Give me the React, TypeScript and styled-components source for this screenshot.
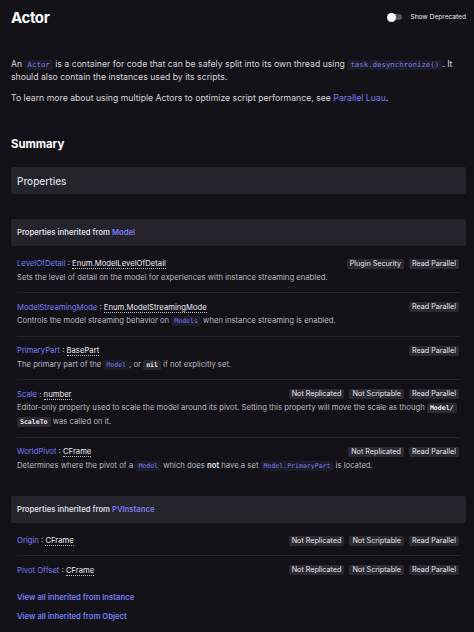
import React from 'react';
import styled, { createGlobalStyle } from 'styled-components';

const GlobalStyle = createGlobalStyle`
  html, body {
    margin: 0;
    padding: 0;
    background: #121118;
  }
  body {
    font-family: Inter, "Noto Sans", "Liberation Sans", sans-serif;
    color: #d9d9de;
  }
`;

const Page = styled.div`
  width: 474px;
  height: 632px;
  overflow: hidden;
  padding: 0 8px 0 11px;
  box-sizing: border-box;
  background: #121118;
`;

const Header = styled.div`
  display: flex;
  align-items: center;
  justify-content: space-between;
  height: 34px;
`;

const Title = styled.h1`
  margin: 0;
  font-size: 15px;
  font-weight: 700;
  color: #ffffff;
  letter-spacing: -0.4px;
`;

const ToggleWrap = styled.label`
  display: flex;
  align-items: center;
  gap: 8px;
  font-size: 6.6px;
  color: #e8e8ec;
`;

const Track = styled.span`
  position: relative;
  width: 14px;
  height: 6px;
  border-radius: 3px;
  background: #55545c;
`;

const Knob = styled.span`
  position: absolute;
  left: -1px;
  top: -1.5px;
  width: 9px;
  height: 9px;
  border-radius: 50%;
  background: #ffffff;
`;

const Intro = styled.div`
  padding-top: 24px;
`;

const Para = styled.p`
  margin: 0 0 8px;
  font-size: 8.7px;
  line-height: 13px;
  color: #d6d6db;
`;

const Link = styled.a`
  color: #7b7cf2;
  text-decoration: none;
`;

const Code = styled.code<{ $link?: boolean }>`
  display: inline-block;
  font-family: "DejaVu Sans Mono", "Liberation Mono", monospace;
  font-size: 0.85em;
  line-height: 10px;
  padding: 0 3px;
  border-radius: 2px;
  background: ${p => (p.$link ? '#1c1b26' : '#2a2a31')};
  color: ${p => (p.$link ? '#7b7cf2' : '#e9e9ee')};
  font-weight: ${p => (p.$link ? 400 : 700)};
`;

const H2 = styled.h2`
  margin: 31px 0 0;
  font-size: 11.3px;
  line-height: 16px;
  font-weight: 700;
  color: #ffffff;
`;

const SectionBox = styled.div<{ $big?: boolean; $mt: number }>`
  display: flex;
  align-items: center;
  height: 27px;
  margin-top: ${p => p.$mt}px;
  padding: 0 6px;
  background: #25242c;
  border-radius: 2px;
  font-size: ${p => (p.$big ? '10px' : '7.7px')};
  font-weight: ${p => (p.$big ? 500 : 600)};
  color: #dcdce2;
`;

const List = styled.div`
  margin-top: 3.5px;
  padding: 0 7px 0 6px;
`;

const Item = styled.div`
  padding: 7px 0 7.5px;
  & + & {
    border-top: 1px solid #25242b;
  }
`;

const Row = styled.div`
  display: flex;
  align-items: center;
  justify-content: space-between;
  height: 14px;
`;

const Name = styled.div`
  font-size: 7.7px;
  line-height: 11px;
  color: #dedee4;
`;

const PropName = styled.span`
  color: #7b7cf2;
`;

const TypeName = styled.span`
  color: #ececf0;
  border-bottom: 1px dotted #bdbdc4;
`;

const Badges = styled.div`
  display: flex;
  gap: 5px;
`;

const Badge = styled.span`
  font-size: 7.2px;
  line-height: 10px;
  padding: 0 3px;
  border-radius: 2px;
  background: #2b2a33;
  color: #e6e6ea;
`;

const Desc = styled.div`
  font-size: 7.7px;
  line-height: 14px;
  color: #b9b9c0;
  b {
    color: #ececf0;
    font-weight: 600;
  }
`;

const Footer = styled.div`
  margin-top: 6px;
  padding-left: 6px;
  display: flex;
  flex-direction: column;
  gap: 5px;
`;

const FooterLink = styled.a`
  font-size: 7.7px;
  line-height: 14px;
  font-weight: 600;
  color: #7b7cf2;
  text-decoration: none;
`;

type Prop = {
  name: string;
  type: string;
  badges: string[];
  desc?: React.ReactNode;
};

const modelProps: Prop[] = [
  {
    name: 'LevelOfDetail',
    type: 'Enum.ModelLevelOfDetail',
    badges: ['Plugin Security', 'Read Parallel'],
    desc: 'Sets the level of detail on the model for experiences with instance streaming enabled.',
  },
  {
    name: 'ModelStreamingMode',
    type: 'Enum.ModelStreamingMode',
    badges: ['Read Parallel'],
    desc: (
      <>
        Controls the model streaming behavior on <Code $link>Models</Code> when instance streaming is enabled.
      </>
    ),
  },
  {
    name: 'PrimaryPart',
    type: 'BasePart',
    badges: ['Read Parallel'],
    desc: (
      <>
        The primary part of the <Code $link>Model</Code>, or <Code>nil</Code> if not explicitly set.
      </>
    ),
  },
  {
    name: 'Scale',
    type: 'number',
    badges: ['Not Replicated', 'Not Scriptable', 'Read Parallel'],
    desc: (
      <>
        Editor-only property used to scale the model around its pivot. Setting this property will move the scale as
        though <Code>Model/</Code>
        <wbr />
        <Code>ScaleTo</Code> was called on it.
      </>
    ),
  },
  {
    name: 'WorldPivot',
    type: 'CFrame',
    badges: ['Not Replicated', 'Read Parallel'],
    desc: (
      <>
        Determines where the pivot of a <Code $link>Model</Code> which does <b>not</b> have a set{' '}
        <Code $link>Model.PrimaryPart</Code> is located.
      </>
    ),
  },
];

const pvProps: Prop[] = [
  { name: 'Origin', type: 'CFrame', badges: ['Not Replicated', 'Not Scriptable', 'Read Parallel'] },
  { name: 'Pivot Offset', type: 'CFrame', badges: ['Not Replicated', 'Not Scriptable', 'Read Parallel'] },
];

const PropItem = ({ prop }: { prop: Prop }) => (
  <Item>
    <Row>
      <Name>
        <PropName>{prop.name}</PropName> : <TypeName>{prop.type}</TypeName>
      </Name>
      <Badges>
        {prop.badges.map(b => (
          <Badge key={b}>{b}</Badge>
        ))}
      </Badges>
    </Row>
    {prop.desc && <Desc>{prop.desc}</Desc>}
  </Item>
);

export default function App() {
  return (
    <Page>
      <GlobalStyle />
      <Header>
        <Title>Actor</Title>
        <ToggleWrap>
          <Track>
            <Knob />
          </Track>
          Show Deprecated
        </ToggleWrap>
      </Header>

      <Intro>
        <Para>
          An <Code $link>Actor</Code> is a container for code that can be safely split into its own thread using{' '}
          <Code $link>task.desynchronize()</Code>. It should also contain the instances used by its scripts.
        </Para>
        <Para>
          To learn more about using multiple Actors to optimize script performance, see <Link>Parallel Luau</Link>.
        </Para>
      </Intro>

      <H2>Summary</H2>
      <SectionBox $big $mt={15}>
        Properties
      </SectionBox>
      <SectionBox $mt={25}>
        Properties inherited from&nbsp;<Link>Model</Link>
      </SectionBox>
      <List>
        {modelProps.map(p => (
          <PropItem key={p.name} prop={p} />
        ))}
      </List>
      <SectionBox $mt={16}>
        Properties inherited from&nbsp;<Link>PVInstance</Link>
      </SectionBox>
      <List>
        {pvProps.map(p => (
          <PropItem key={p.name} prop={p} />
        ))}
      </List>
      <Footer>
        <FooterLink>View all inherited from Instance</FooterLink>
        <FooterLink>View all inherited from Object</FooterLink>
      </Footer>
    </Page>
  );
}
